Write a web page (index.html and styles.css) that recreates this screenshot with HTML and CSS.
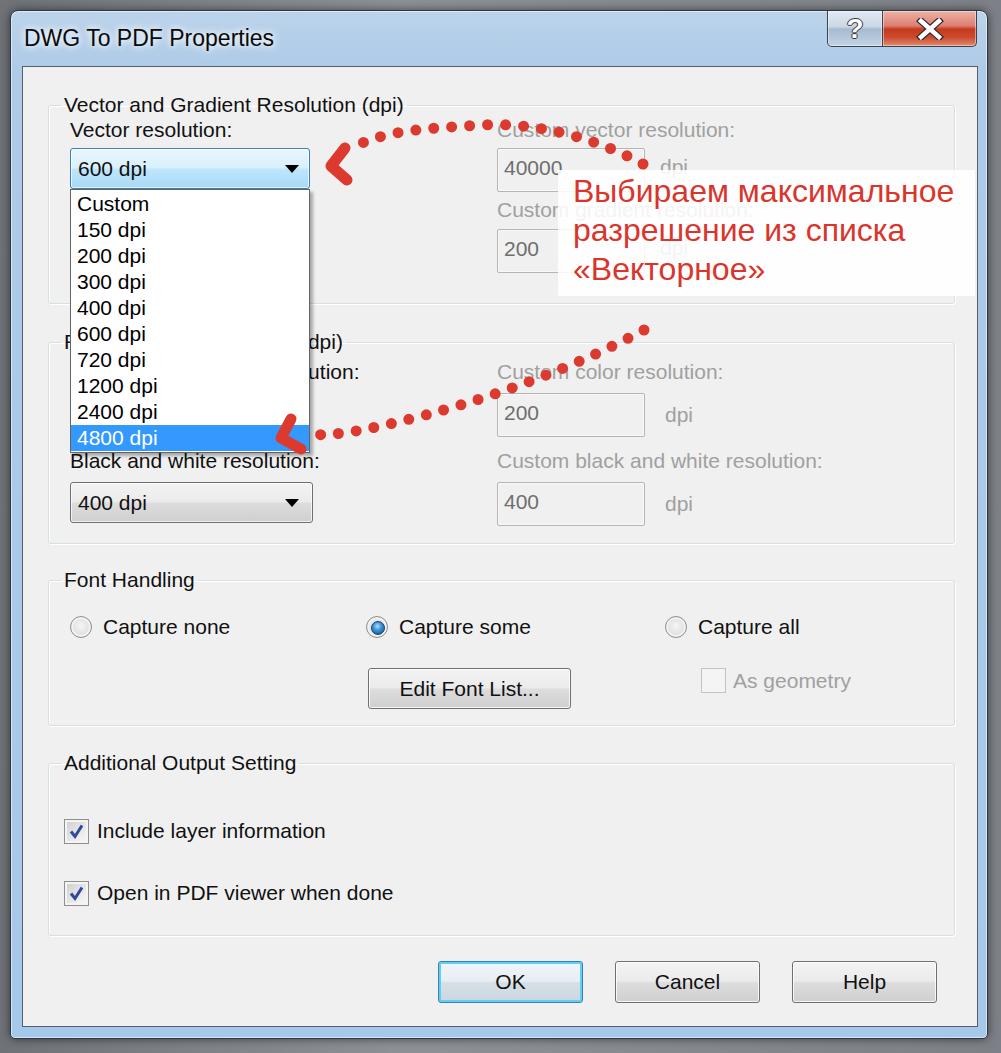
FILE: index.html
```html
<!DOCTYPE html>
<html lang="en">
<head>
<title>DWG To PDF Properties</title>
<meta charset="utf-8">
<link rel="stylesheet" href="styles.css">
</head>
<body>
	<div class="window">
		<div class="titlebar">
			<span class="title">DWG To PDF Properties</span>
			<div class="caption">
				<span class="cap cap-help">?</span>
				<span class="cap cap-close">
					<svg width="28" height="22" viewBox="0 0 28 22">
						<path d="M5 3 L23 19 M23 3 L5 19" stroke="#2b2b2b" stroke-width="7" stroke-linecap="square"/>
						<path d="M5 3 L23 19 M23 3 L5 19" stroke="#fff" stroke-width="4.5" stroke-linecap="square"/>
					</svg>
				</span>
			</div>
		</div>

		<div class="client">
			<!-- vector / gradient -->
			<fieldset class="group g-vector">
				<legend>Vector and Gradient Resolution (dpi)</legend>
				<div class="res res-tight">
					<div class="label">Vector resolution:</div>
					<div class="label dim">Custom vector resolution:</div>
					<div class="combo combo-focus">
						<span>600 dpi</span><i class="caret"></i>
						<ul class="droplist">
							<li>Custom</li>
							<li>150 dpi</li>
							<li>200 dpi</li>
							<li>300 dpi</li>
							<li>400 dpi</li>
							<li>600 dpi</li>
							<li>720 dpi</li>
							<li>1200 dpi</li>
							<li>2400 dpi</li>
							<li class="sel">4800 dpi</li>
						</ul>
					</div>
					<div class="inrow"><div class="field">40000</div><span class="dim unit">dpi</span></div>
					<div class="label"></div>
					<div class="label dim">Custom gradient resolution:</div>
					<div class="combo"><i class="caret"></i></div>
					<div class="inrow"><div class="field">200</div><span class="dim unit">dpi</span></div>
				</div>
			</fieldset>

			<!-- raster -->
			<fieldset class="group g-raster">
				<legend>Raster Image Resolution (dpi)</legend>
				<div class="res res-wide">
					<div class="label">Color and grayscale resolution:</div>
					<div class="label dim">Custom color resolution:</div>
					<div class="combo"><i class="caret"></i></div>
					<div class="inrow"><div class="field">200</div><span class="dim unit unit-r">dpi</span></div>
					<div class="label">Black and white resolution:</div>
					<div class="label dim">Custom black and white resolution:</div>
					<div class="combo combo-bw"><span>400 dpi</span><i class="caret"></i></div>
					<div class="inrow"><div class="field">400</div><span class="dim unit unit-r">dpi</span></div>
				</div>
			</fieldset>

			<!-- fonts -->
			<fieldset class="group g-fonts">
				<legend>Font Handling</legend>
				<div class="fonts">
					<label class="opt"><i class="radio"></i>Capture none</label>
					<label class="opt"><i class="radio on"></i>Capture some</label>
					<label class="opt"><i class="radio"></i>Capture all</label>
					<span></span>
					<button class="btn btn-fonts">Edit Font List...</button>
					<label class="opt opt-geo dim"><i class="check off"></i>As geometry</label>
				</div>
			</fieldset>

			<!-- output -->
			<fieldset class="group g-output">
				<legend>Additional Output Setting</legend>
				<div class="opts">
					<label class="opt"><i class="check"><svg width="17" height="17" viewBox="0 0 17 17"><path d="M3 8.5 L7 13.5 L14 2.5" fill="none" stroke="#30499a" stroke-width="3"/></svg></i>Include layer information</label>
					<label class="opt"><i class="check"><svg width="17" height="17" viewBox="0 0 17 17"><path d="M3 8.5 L7 13.5 L14 2.5" fill="none" stroke="#30499a" stroke-width="3"/></svg></i>Open in PDF viewer when done</label>
				</div>
			</fieldset>

			<div class="actions">
				<button class="btn btn-default">OK</button>
				<button class="btn">Cancel</button>
				<button class="btn">Help</button>
			</div>
		</div>
	</div>

	<div class="note">Выбираем максимальное<br>разрешение из списка<br>«Векторное»</div>

	<svg class="arrows" width="1001" height="1053" viewBox="0 0 1001 1053">
		<path class="dots" d="M643 164 C 592 136, 532 122, 482 125 S 392 130, 362 143"/>
		<path class="head" d="M345 148 L331 166 L347 180"/>
		<path class="dots" d="M644 330 C 562 374, 472 404, 402 421 S 336 432, 310 436"/>
		<path class="head" d="M291 419 L281 438 L301 449"/>
	</svg>
</body>
</html>
```

FILE: styles.css
```css
* { box-sizing: border-box; }
body{
	margin: 0;
	height: 1053px;
	overflow: hidden;
	background: linear-gradient(90deg, #6f7378 0, #8e9297 40%, #7d8187 100%);
	font-family: "Liberation Sans", Arial, sans-serif;
	font-size: 21px;
	color: #111;
}

/*************** window frame ******/
.window{
	margin: 10px 0 0 10px;
	width: 978px;
	height: 1029px;
	border: 1px solid #2e3642;
	border-radius: 8px 8px 5px 5px;
	background: linear-gradient(180deg, #bcd3ea 0, #aecbe8 56px, #a6c8ea 100%);
	box-shadow: 0 0 10px rgba(0,0,0,0.55), inset 0 0 0 1px rgba(255,255,255,0.55);
	padding: 0 9px 11px 11px;
	display: flex;
	flex-direction: column;
}
.titlebar{
	height: 55px;
	display: flex;
	justify-content: space-between;
	align-items: flex-start;
	padding: 0 1px 0 2px;
}
.title{
	margin-top: 13px;
	font-size: 23px;
	line-height: 28px;
	color: #0a0a0a;
	text-shadow: 0 0 6px #fff, 0 0 10px rgba(255,255,255,0.9);
}
.caption{ display: flex; }
.cap{
	height: 36px;
	border: 1px solid #39424e;
	border-top: 0;
	display: flex;
	align-items: center;
	justify-content: center;
	box-shadow: inset 0 0 0 1px rgba(255,255,255,0.45);
}
.cap-help{
	width: 56px;
	border-radius: 0 0 0 5px;
	background: linear-gradient(#e2eaf2 0, #c9d7e5 45%, #a7bbd0 52%, #c2d3e3 100%);
	font-size: 28px;
	font-weight: bold;
	color: #fff;
	text-shadow: 1px 0 0 #333, -1px 0 0 #333, 0 1px 0 #333, 0 -1px 0 #333;
}
.cap-close{
	width: 94px;
	border-left: 0;
	border-radius: 0 0 5px 0;
	background: linear-gradient(#eeb2a6 0, #dc8072 42%, #c43a1f 52%, #cc4a2e 75%, #e08a70 100%);
}

.client{
	flex: 1;
	border: 1px solid #56606c;
	background: #f0f0f0;
	padding: 26px 22px 0 25px;
}

/*************** groups ******/
.group{
	margin: 0 0 26px 0;
	min-width: 0;
	border: 1px solid #d5dfe5;
	border-radius: 3px;
	box-shadow: inset 1px 1px 0 #fff, 1px 1px 0 #fff;
	padding: 1px 21px 30px 12px;
}
.group legend{ padding: 0 3px; line-height: 24px; }
.g-raster{ padding-top: 6px; padding-bottom: 17px; margin-bottom: 24px; }
.g-fonts{ padding-top: 22px; padding-bottom: 16px; margin-bottom: 25px; }
.g-output{ padding-top: 43px; padding-bottom: 29px; margin-bottom: 25px; }

.res{
	display: grid;
	grid-template-columns: 243px 1fr;
	grid-template-rows: 24px 44px 24px 45px;
	column-gap: 184px;
	margin-left: 9px;
}
.res-tight{ row-gap: 6px; }
.res-wide{ row-gap: 9px; grid-template-rows: 24px 44px 27px 44px; }
.res-wide .label{ align-self: end; }
.label{ line-height: 24px; white-space: nowrap; }
.dim{ color: #a0a0a0; }

.combo{
	position: relative;
	width: 240px;
	height: 41px;
	border: 1px solid #707070;
	border-radius: 3px;
	background: linear-gradient(#f3f3f3 0, #ebebeb 48%, #dddddd 52%, #cfcfcf 100%);
	box-shadow: inset 0 0 0 1px rgba(255,255,255,0.7);
	display: flex;
	align-items: center;
	justify-content: space-between;
	padding: 0 10px 0 7px;
}
.combo-bw{ width: 243px; padding-right: 13px; }
.combo-focus{
	border-color: #3c7fb1;
	background: linear-gradient(#eaf6fd 0, #d9f0fc 48%, #bee6fd 52%, #a7d9f5 100%);
}
.caret{
	width: 0;
	height: 0;
	margin-left: auto;
	border-left: 7px solid transparent;
	border-right: 7px solid transparent;
	border-top: 8px solid #000;
}
.droplist{
	position: absolute;
	left: -1px;
	top: 40px;
	z-index: 5;
	width: 240px;
	margin: 0;
	padding: 1px 0;
	list-style: none;
	background: #fff;
	border: 1px solid #646464;
	box-shadow: 3px 3px 3px rgba(0,0,0,0.3);
}
.droplist li{ height: 26px; line-height: 26px; padding-left: 6px; color: #000; }
.droplist li.sel{ background: #3399ff; color: #fff; }

.inrow{ display: flex; align-items: center; }
.field{
	width: 148px;
	height: 44px;
	border: 1px solid #b5b5b5;
	border-radius: 2px;
	background: #f0f0f0;
	box-shadow: inset 0 0 0 1px #f8f8f8;
	color: #6e6e6e;
	padding: 4px 0 0 6px;
	line-height: 30px;
}
.unit{ margin-left: 15px; margin-top: -6px; }
.unit-r{ margin-left: 20px; margin-top: 0; }

/*************** font handling ******/
.fonts{
	display: grid;
	grid-template-columns: 296px 299px 1fr;
	grid-template-rows: 26px 41px;
	row-gap: 28px;
	margin-left: 9px;
}
.opt{ display: flex; align-items: center; gap: 11px; white-space: nowrap; }
.radio{
	position: relative;
	width: 22px;
	height: 22px;
	border-radius: 50%;
	border: 1px solid #8e9091;
	background: radial-gradient(circle at 50% 45%, #f5f5f5 0, #e2e2e2 55%, #cfcfcf 100%);
	box-shadow: inset 0 0 0 2px #f3f3f3;
}
.radio.on::after{
	content: "";
	position: absolute;
	left: 4px;
	top: 4px;
	width: 12px;
	height: 12px;
	border-radius: 50%;
	background: radial-gradient(circle at 45% 35%, #a9e2ff 0, #3b93d6 40%, #0d4f8f 100%);
	border: 1px solid #1b3f66;
}
.btn{
	font-family: inherit;
	font-size: 21px;
	color: #111;
	height: 42px;
	width: 145px;
	border: 1px solid #707070;
	border-radius: 3px;
	background: linear-gradient(#f3f3f3 0, #ebebeb 48%, #dddddd 52%, #cfcfcf 100%);
	box-shadow: inset 0 0 0 1px rgba(255,255,255,0.8);
	padding: 0;
}
.btn-fonts{ width: 203px; height: 41px; margin-left: 2px; }
.btn-default{
	border-color: #3c7fb1;
	box-shadow: inset 0 0 0 2px #5fcff8;
	background: linear-gradient(#f0f6fa 0, #e7eef3 48%, #d6dfe6 52%, #cbd6de 100%);
}
.opt-geo{ margin-left: 36px; align-self: start; gap: 7px; }

.check{
	width: 25px;
	height: 25px;
	border: 1px solid #8e8f8f;
	background: linear-gradient(135deg, #cdcdcd 0, #eeeeee 70%, #f8f8f8 100%);
	box-shadow: inset 0 0 0 2px #f4f4f4;
	display: flex;
	align-items: center;
	justify-content: center;
}
.check.off{ border-color: #c3c3c3; background: #f4f4f4; box-shadow: none; }

/*************** output ******/
.opts{
	display: flex;
	flex-direction: column;
	gap: 36px;
	margin-left: 3px;
}
.opts .opt{ height: 26px; gap: 8px; }

.actions{
	display: flex;
	justify-content: flex-end;
	gap: 32px;
	padding-right: 18px;
}

/*************** annotation ******/
.note{
	position: absolute;
	z-index: 6;
	left: 558px;
	top: 170px;
	width: 417px;
	height: 126px;
	background: rgba(255,255,255,0.88);
	padding: 2px 0 0 15px;
	color: #d9352c;
	font-size: 32px;
	line-height: 39px;
	white-space: nowrap;
}
.arrows{
	position: absolute;
	z-index: 7;
	left: 0;
	top: 0;
	pointer-events: none;
}
.arrows .dots{
	fill: none;
	stroke: #dc3a2f;
	stroke-width: 11;
	stroke-linecap: round;
	stroke-dasharray: 0 18;
}
.arrows .head{
	fill: none;
	stroke: #dc3a2f;
	stroke-width: 11;
	stroke-linecap: round;
	stroke-linejoin: round;
}
```
